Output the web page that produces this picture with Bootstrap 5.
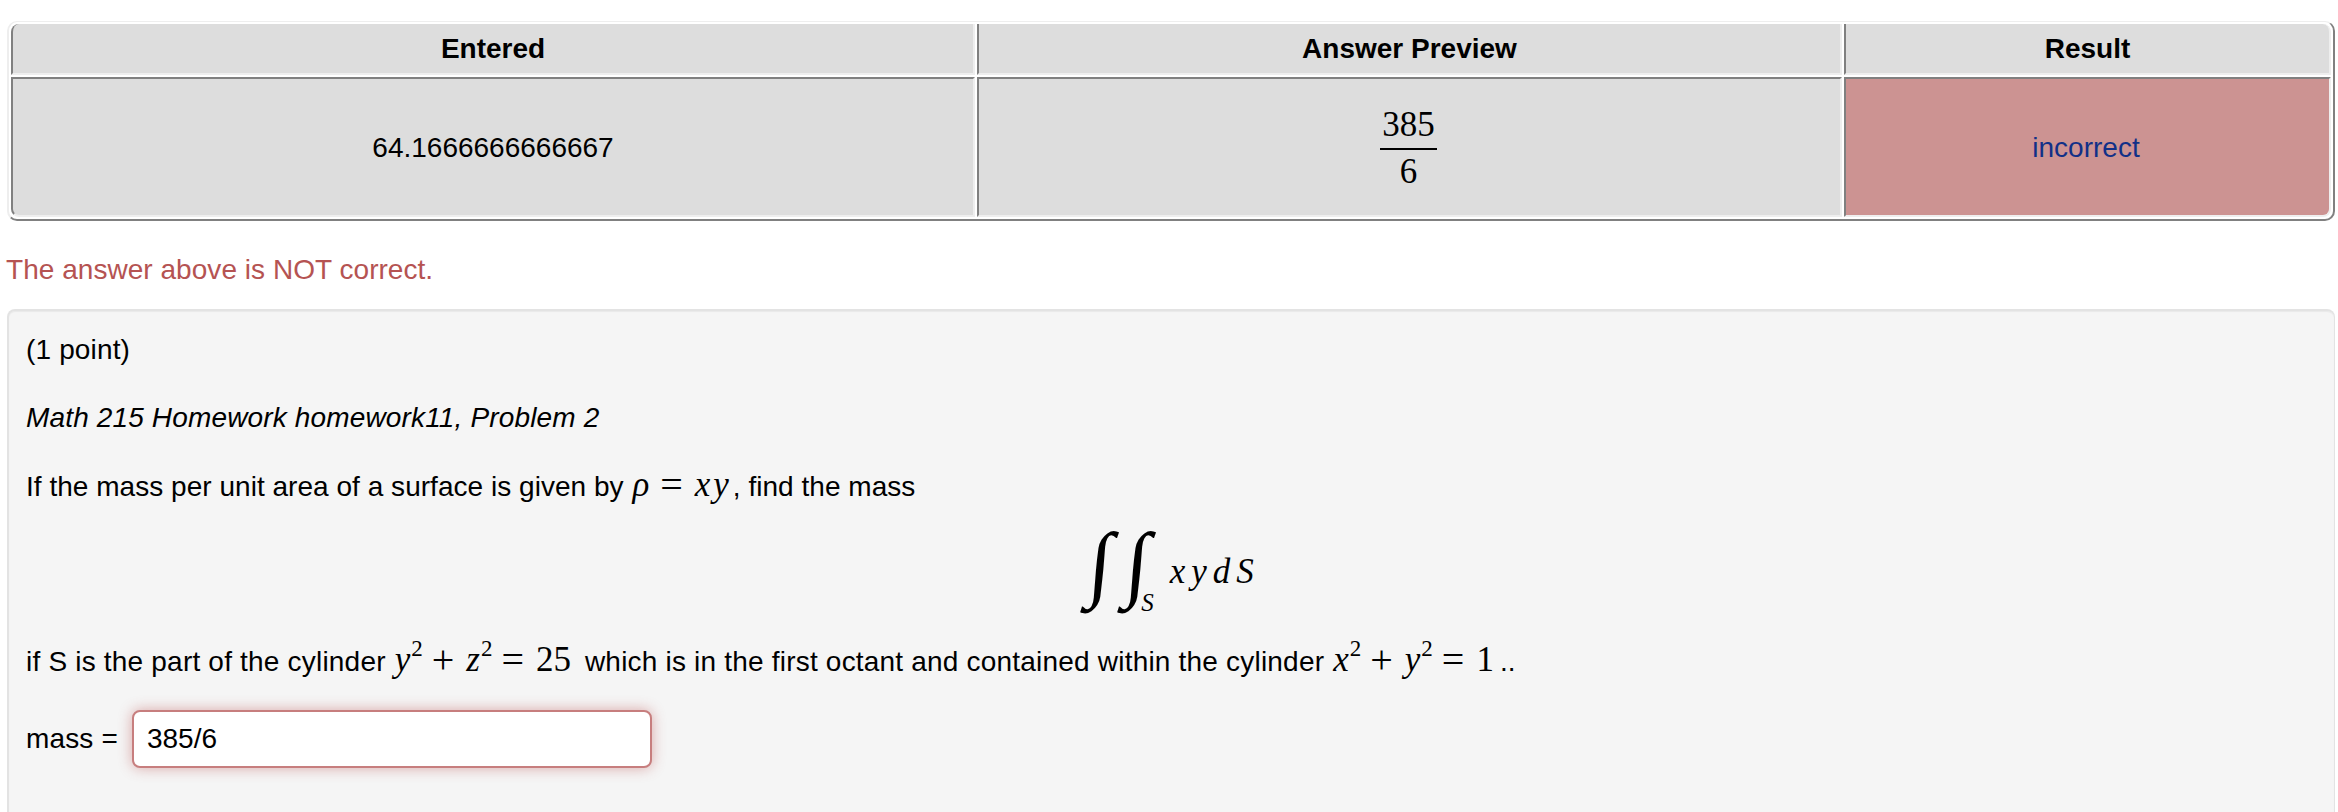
<!DOCTYPE html>
<html lang="en">
<head>
<meta charset="utf-8">
<title>Math 215 Homework</title>
<link href="https://cdn.jsdelivr.net/npm/bootstrap@5.3.0/dist/css/bootstrap.min.css" rel="stylesheet">
<style>
html, body { height: 100%; }
body { margin: 0; padding: 0 3px 0 7px; overflow: hidden; background: #fff; font-family: "Liberation Sans", Arial, sans-serif; font-size: 28px; line-height: 40px; color: #000; }
.top-gap { height: 21px; }
.results { width: 100%; margin: 0; table-layout: fixed; border-collapse: separate; border-spacing: 2px; border-style: solid; border-color: #eee #808080 #808080 #eee; border-width: 1px 2px 2px 2px; border-radius: 10px; font-size: 28px; line-height: 40px; color: #000; }
.results td, .results th { background: #ddd; text-align: center; vertical-align: middle; padding: 1px 0 0; border-style: solid; border-color: #808080 #eee #eee #808080; border-width: 2px; }
.results thead th { height: 51px; border-top-width: 0; font-weight: 700; }
.results tbody td { height: 140px; }
.results thead th:first-child { border-top-left-radius: 8px; }
.results thead th:last-child { border-top-right-radius: 8px; }
.results tbody td:first-child { border-bottom-left-radius: 8px; }
.results tbody td:last-child { border-bottom-right-radius: 8px; }
.c1 { width: 964px; } .c2 { width: 865px; }
.results td.bad { background: #cc9392; color: #113088; padding-right: 3px; }
.verdict { margin: 29px 0 0 -1px; height: 40px; color: #b55352; font-size: 28px; letter-spacing: .04px; }
.problem { margin-top: 19px; height: 520px; border: solid #e3e3e3; border-width: 2px 1px 0 2px; border-radius: 8px 8px 0 0; background: #f5f5f5; box-shadow: inset 0 1px 1px rgba(0,0,0,.05); padding: 19px 17px 0; letter-spacing: .15px; }
.problem p { margin: 0; }
.h68 { height: 68px; } .h69 { height: 69px; } .h50 { height: 50px; }
.tight { letter-spacing: .03px; } .wide { letter-spacing: .2px; }
.m { font-family: "Liberation Serif", "Times New Roman", serif; font-size: 35px; line-height: 0; white-space: nowrap; letter-spacing: 0; margin: 0 1px; }
.wide .m { margin-right: 6px; }
.m i { font-style: italic; letter-spacing: 3px; }
.m i.rho { letter-spacing: 2px; }
.m sup { font-size: 23px; top: -15px; position: relative; vertical-align: baseline; line-height: 0; margin-left: -2px; }
.op { font-size: 40px; margin: 0 12px 0 9px; position: relative; top: 2px; }
.frac { display: inline-flex; flex-direction: column; align-items: center; font-family: "Liberation Serif", serif; font-size: 35px; line-height: 38px; position: relative; top: 1px; left: -1px; }
.frac span:first-child { border-bottom: 2px solid #000; padding: 0 2px 4px; margin-bottom: 3px; }
.display { height: 110px; margin-bottom: 15px; letter-spacing: 0; }
.intg { font-family: "Liberation Serif", serif; font-size: 84px; line-height: 80px; font-style: italic; font-weight: 400; display: inline-block; transform: translateY(-9px) skewX(-5deg); margin: 0 7px; }
.sub { font-family: "Liberation Serif", serif; font-style: italic; font-size: 25px; line-height: 1; align-self: flex-end; margin: 0 0 12px -15px; }
.display .m i { letter-spacing: 6px; }
.answer-row { margin-top: 28px; height: 58px; gap: 14px; }
.answer-input { flex: none; width: 520px; height: 58px; padding: 0 13px; font-size: 28px; font-family: "Liberation Sans", sans-serif; line-height: 40px; color: #000; border: 2px solid #c77e7e; border-radius: 8px; background: #fff; box-shadow: 0 0 14px rgba(185,74,72,.45); }
.answer-input:focus { color: #000; border-color: #c77e7e; box-shadow: 0 0 14px rgba(185,74,72,.45); }
</style>
</head>
<body>
<div class="top-gap"></div>
<table class="table results">
  <colgroup><col class="c1"><col class="c2"><col></colgroup>
  <thead><tr><th>Entered</th><th>Answer Preview</th><th>Result</th></tr></thead>
  <tbody><tr>
    <td>64.1666666666667</td>
    <td><span class="frac"><span>385</span><span>6</span></span></td>
    <td class="bad">incorrect</td>
  </tr></tbody>
</table>
<div class="verdict">The answer above is NOT correct.</div>
<div class="problem">
  <p class="h68">(1 point)</p>
  <p class="h69"><em>Math 215 Homework homework11, Problem 2</em></p>
  <p class="h50 tight">If the mass per unit area of a surface is given by <span class="m"><i class="rho">ρ</i><span class="op">=</span><i>xy</i></span>, find the mass</p>
  <div class="display d-flex justify-content-center align-items-center">
    <span class="intg">∫</span><span class="intg">∫</span><span class="sub">S</span>
    <span class="m ms-3"><i>xy</i><i>dS</i></span>
  </div>
  <p class="wide">if S is the part of the cylinder <span class="m"><i>y</i><sup>2</sup><span class="op">+</span><i>z</i><sup>2</sup><span class="op">=</span>25</span> which is in the first octant and contained within the cylinder <span class="m"><i>x</i><sup>2</sup><span class="op">+</span><i>y</i><sup>2</sup><span class="op">=</span>1</span>..</p>
  <div class="answer-row d-flex align-items-center">
    <label for="mass">mass =</label>
    <input id="mass" class="form-control answer-input" type="text" value="385/6">
  </div>
</div>
<script src="https://cdn.jsdelivr.net/npm/bootstrap@5.3.0/dist/js/bootstrap.bundle.min.js"></script>
</body>
</html>
